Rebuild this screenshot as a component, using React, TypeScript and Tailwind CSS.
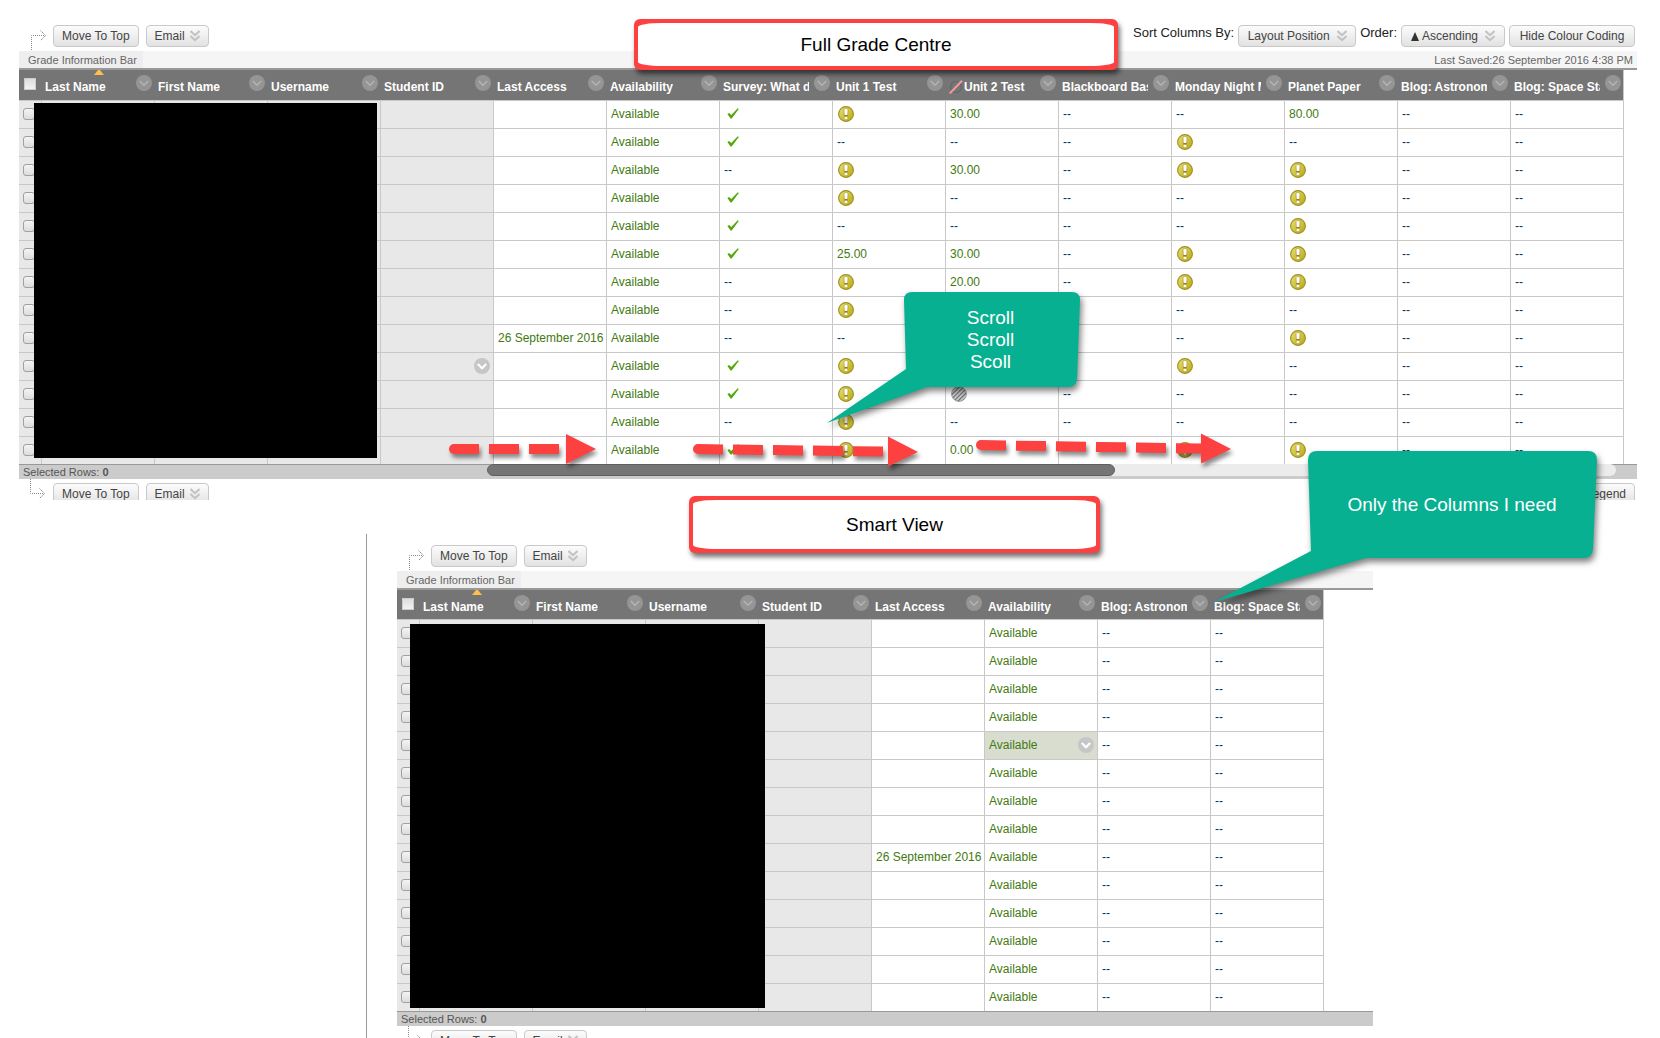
import React from "react";

type Cell = "ok" | "!" | "hatch" | string;

const IDENTITY = ["Last Name", "First Name", "Username", "Student ID"];

const FULL_COLUMNS = [
  "Survey: What d",
  "Unit 1 Test",
  "Unit 2 Test",
  "Blackboard Bas",
  "Monday Night M",
  "Planet Paper",
  "Blog: Astronom",
  "Blog: Space Sta",
];

const SMART_COLUMNS = ["Blog: Astronom", "Blog: Space Sta"];

const FULL_ROWS: Cell[][] = [
  ["ok", "!", "30.00", "--", "--", "80.00", "--", "--"],
  ["ok", "--", "--", "--", "!", "--", "--", "--"],
  ["--", "!", "30.00", "--", "!", "!", "--", "--"],
  ["ok", "!", "--", "--", "--", "!", "--", "--"],
  ["ok", "--", "--", "--", "--", "!", "--", "--"],
  ["ok", "25.00", "30.00", "--", "!", "!", "--", "--"],
  ["--", "!", "20.00", "--", "!", "!", "--", "--"],
  ["--", "!", "--", "--", "--", "--", "--", "--"],
  ["--", "--", "--", "--", "--", "!", "--", "--"],
  ["ok", "!", "--", "--", "!", "--", "--", "--"],
  ["ok", "!", "hatch", "--", "--", "--", "--", "--"],
  ["--", "!", "--", "--", "--", "--", "--", "--"],
  ["ok", "!", "0.00", "--", "!", "!", "--", "--"],
];

const SMART_ROWS: Cell[][] = Array.from({ length: 14 }, () => ["--", "--"]);

function DoubleChevron() {
  return (
    <svg width="10" height="12" viewBox="0 0 10 12" fill="none" stroke="#c2c2c2" strokeWidth="2" aria-hidden="true">
      <path d="M0.5 1 L5 5.2 L9.5 1 M0.5 6 L5 10.2 L9.5 6" />
    </svg>
  );
}

function CircleChevron({ light = false }: { light?: boolean }) {
  return (
    <svg width="16" height="16" viewBox="0 0 16 16" fill="none" aria-hidden="true">
      <circle cx="8" cy="8" r="8" fill={light ? "#c6c6c8" : "#959595"} />
      <path d="M3.8 6 L8 10.2 L12.2 6" stroke={light ? "#ffffff" : "#b4b4b4"} strokeWidth={light ? 2.2 : 1.5} />
    </svg>
  );
}

function NeedsGrading() {
  return (
    <svg width="16" height="16" viewBox="0 0 16 16" role="img" aria-label="Needs grading" className="ml-px block">
      <defs>
        <linearGradient id="gold" x1="0" y1="0" x2="1" y2="1">
          <stop offset="0" stopColor="#e6e27c" />
          <stop offset="1" stopColor="#b5a80c" />
        </linearGradient>
      </defs>
      <circle cx="8" cy="8" r="7.4" fill="url(#gold)" stroke="#a08f1c" strokeWidth="1.1" />
      <path d="M6 3 Q8 2 10 3 L9.6 9.4 H6.4 Z" fill="#fff" stroke="#a5871e" strokeWidth="0.5" />
      <path d="M6.4 9.8 H9.6" stroke="#8e4b1c" strokeWidth="0.9" />
      <ellipse cx="8" cy="12" rx="1.9" ry="1.5" fill="#fff" stroke="#a5871e" strokeWidth="0.4" />
    </svg>
  );
}

function Completed() {
  return (
    <svg width="12" height="11" viewBox="0 0 12 11" role="img" aria-label="Completed" className="ml-[3px] block">
      <path d="M0.4 6 L2.2 5 L4.2 7 L10.8 0.3 L11.8 1 L4.7 10.4 L3.5 10.4 Z" fill="#55a80c" />
    </svg>
  );
}

function Exempt() {
  return (
    <svg width="16" height="16" viewBox="0 0 16 16" role="img" aria-label="Exempt" className="ml-px block">
      <defs>
        <pattern id="hatch" width="3" height="3" patternUnits="userSpaceOnUse" patternTransform="rotate(45)">
          <rect width="3" height="3" fill="#d6d6d6" />
          <rect width="1.3" height="3" fill="#6b6b6b" />
        </pattern>
      </defs>
      <circle cx="8" cy="8" r="7.4" fill="url(#hatch)" stroke="#8a8a8a" strokeWidth="0.8" />
    </svg>
  );
}

function HiddenFromStudents() {
  return (
    <svg width="15" height="14" viewBox="0 0 15 14" fill="none" role="img" aria-label="Hidden" className="mt-px shrink-0">
      <circle cx="7" cy="7" r="5.5" stroke="#656565" strokeWidth="1.2" />
      <path d="M0.8 13.4 L13 0.8" stroke="#f79a9a" strokeWidth="2" />
    </svg>
  );
}

function FlowArrow({ up = true }: { up?: boolean }) {
  return (
    <svg width="16" height="20" viewBox="0 0 16 20" fill="none" stroke="#8a8a8a" aria-hidden="true" className={up ? "mt-[5px]" : ""}>
      <path d={up ? "M0.5 20 V5.5 H14" : "M0.5 0 V14.5 H14"} strokeDasharray="1 1" />
      <path d={up ? "M9.5 0.5 L14.5 5.5 L9.5 10.5" : "M9.5 9.5 L14.5 14.5 L9.5 19.5"} strokeDasharray="1.4 0.6" />
    </svg>
  );
}

function ToolButton({ children, menu = false, size = "gap-[7px]" }: { children: React.ReactNode; menu?: boolean; size?: string }) {
  return (
    <button
      type="button"
      aria-haspopup={menu ? "menu" : undefined}
      className={`flex h-[22px] shrink-0 items-center justify-center rounded-sm border border-[#c9c9c9] bg-linear-to-b from-[#fcfcfc] to-[#e2e2e2] px-2 text-xs whitespace-nowrap text-[#444] ${size}`}
    >
      {children}
      {menu && <DoubleChevron />}
    </button>
  );
}

function ActionButtons({ up = true }: { up?: boolean }) {
  return (
    <div className="flex items-start">
      <FlowArrow up={up} />
      <div className={up ? "ml-1.5 flex gap-[7px]" : "mt-1 ml-[7px] flex gap-[7px]"}>
        <ToolButton>Move To Top</ToolButton>
        <ToolButton menu size="gap-[5px]">
          Email
        </ToolButton>
      </div>
    </div>
  );
}

function InformationBar({ saved }: { saved?: string }) {
  return (
    <div className="flex h-[19px] items-stretch justify-between border-b-2 border-[#999] bg-[#f5f5f5] text-[11px] leading-[17px] text-[#666]">
      <span className="w-[124px] bg-[#eee] pt-px pl-[9px]">Grade Information Bar</span>
      {saved && <span className="pt-px pr-1">{saved}</span>}
    </div>
  );
}

function Tick({ label, head = false }: { label: string; head?: boolean }) {
  return (
    <input
      type="checkbox"
      aria-label={label}
      className={
        head
          ? "mt-2 ml-[5px] block size-3 appearance-none border border-[#ccc] bg-linear-to-b from-[#ddd] to-[#f2f2f2]"
          : "ml-1 block size-3 appearance-none rounded-[3px] border border-[#a0a0a0] bg-linear-to-b from-[#f4f4f4] to-[#ddd]"
      }
    />
  );
}

function CellContent({ value }: { value: Cell }) {
  if (value === "ok") return <Completed />;
  if (value === "!") return <NeedsGrading />;
  if (value === "hatch") return <Exempt />;
  return <span className={value === "--" ? "text-[#003366]" : "text-[#427a10]"}>{value}</span>;
}

interface GridProps {
  columns: string[];
  rows: Cell[][];
  headHeight: string;
  accessRow: number;
  idMenuRow?: number;
  activeRow?: number;
}

function GradeGrid({ columns, rows, headHeight, accessRow, idMenuRow, activeRow }: GridProps) {
  const heads = [...IDENTITY, "Last Access", "Availability", ...columns];
  const line = "border-t border-l border-[#c8c8c8]";
  return (
    <table className="w-full table-fixed border-separate border-spacing-0 border-r border-[#c8c8c8] text-xs leading-4">
      <thead>
        <tr className={`bg-[#757575] text-white ${headHeight}`}>
          <th scope="col" className="w-[22px] p-0 align-top">
            <Tick head label="Select all rows" />
          </th>
          {heads.map((name, i) => (
            <th key={name} scope="col" className="relative p-0 text-left align-top font-bold">
              {i === 0 && (
                <svg width="10" height="5" viewBox="0 0 10 5" className="absolute top-0 left-[53px]" role="img" aria-label="Sorted ascending">
                  <path d="M0 5 L4 0 H6 L10 5 Z" fill="#ffbf4d" />
                </svg>
              )}
              <div className="flex items-start gap-[5px] pr-0.5 pl-1">
                <span className="mt-[9px] flex min-w-0 flex-1 overflow-hidden whitespace-nowrap">
                  {name === "Unit 2 Test" && <HiddenFromStudents />}
                  {name}
                </span>
                <button type="button" aria-label={`${name} options`} className="mt-[5px] shrink-0">
                  <CircleChevron />
                </button>
              </div>
            </th>
          ))}
        </tr>
      </thead>
      <tbody>
        {rows.map((row, r) => (
          <tr key={r} className="h-7">
            <td className="border-t border-[#c8c8c8] bg-[#e8e8e8] p-0 pb-0.5">
              <Tick label={`Select row ${r + 1}`} />
            </td>
            {IDENTITY.map((name) => (
              <td key={name} className={`bg-[#e8e8e8] p-0 pb-0.5 ${line}`}>
                {name === "Student ID" && r === idMenuRow && (
                  <button type="button" aria-label="Cell options" className="ml-auto mr-[3px] block">
                    <CircleChevron light />
                  </button>
                )}
              </td>
            ))}
            <td className={`overflow-hidden p-0 pb-0.5 pl-1 whitespace-nowrap text-[#427a10] ${line}`}>
              {r === accessRow && "26 September 2016"}
            </td>
            <td className={`p-0 pb-0.5 pl-1 text-[#427a10] ${line} ${r === activeRow ? "bg-[#d9ddd0]" : ""}`}>
              <div className="flex items-center justify-between pr-[3px]">
                Available
                {r === activeRow && (
                  <button type="button" aria-label="Cell options">
                    <CircleChevron light />
                  </button>
                )}
              </div>
            </td>
            {row.map((value, c) => (
              <td key={c} className={`p-0 pb-0.5 pl-1 ${line}`}>
                <CellContent value={value} />
              </td>
            ))}
          </tr>
        ))}
      </tbody>
    </table>
  );
}

function SelectedRows({ scroll = false }: { scroll?: boolean }) {
  return (
    <div className="relative h-[15px] border-t border-[#999] bg-[#cbcbcb] pl-1 text-[11px] leading-[14px] text-[#555]">
      Selected Rows: <b>0</b>
      {scroll && (
        <div className="absolute -top-px right-[21px] left-[468px] h-3 rounded-full bg-[#ececec]">
          <div className="h-3 w-[628px] rounded-full border border-[#606060] bg-[#757575]" />
        </div>
      )}
    </div>
  );
}

function Caption({ children, place }: { children: React.ReactNode; place: string }) {
  return (
    <div className={`absolute rounded-md bg-[#fd4141] p-1 shadow-[2px_4px_5px_rgba(0,0,0,0.55)] ${place}`}>
      <div className="flex h-full items-center justify-center rounded-[24px/4px] bg-white pt-0.5 text-[19px] text-black">{children}</div>
    </div>
  );
}

function Callout({ place, path, text, children }: { place: string; path: string; text: string; children: React.ReactNode }) {
  return (
    <div className={`absolute ${place}`}>
      <svg className="absolute inset-0 size-full overflow-visible drop-shadow-[2px_4px_3px_rgba(0,0,0,0.5)]" aria-hidden="true">
        <path d={path} fill="#08b092" />
      </svg>
      <div className={`relative flex flex-col items-center justify-center text-[19px] leading-[22px] text-white ${text}`}>{children}</div>
    </div>
  );
}

interface ArrowProps {
  place: string;
  dashes: [number, number][];
  head: number;
  drop: number;
}

function DashedArrow({ place, dashes, head, drop }: ArrowProps) {
  const total = head + 30;
  const y = (x: number) => 15 + (drop * x) / total;
  return (
    <svg
      width={total}
      height="34"
      className={`absolute overflow-visible drop-shadow-[2px_4px_2px_rgba(0,0,0,0.45)] ${place}`}
      fill="#fd4141"
      aria-hidden="true"
    >
      {dashes.map(([a, b], i) => (
        <path
          key={a}
          d={
            i === 0
              ? `M5 ${y(0) - 5} L${b} ${y(b) - 5} V${y(b) + 5} L5 ${y(0) + 5} A5 5 0 0 1 5 ${y(0) - 5} Z`
              : `M${a} ${y(a) - 5} L${b} ${y(b) - 5} V${y(b) + 5} L${a} ${y(a) + 5} Z`
          }
        />
      ))}
      <path d={`M${head} ${y(head) - 15} L${total} ${y(total)} L${head} ${y(head) + 15} Z`} />
    </svg>
  );
}

export default function App() {
  return (
    <main className="relative min-h-screen overflow-hidden bg-white font-['Liberation_Sans',Arial,sans-serif]">
      <section aria-label="Full Grade Centre" className="relative mr-[23px] ml-[19px] pt-[25px]">
        <div className="flex h-[26px] items-start justify-between pr-0.5 pl-3">
          <ActionButtons />
          <div className="flex items-start gap-1 text-[13px] leading-[15px] text-[#222]">
            <span>Sort Columns By:</span>
            <ToolButton menu size="min-w-[118px] gap-[7px]">
              Layout Position
            </ToolButton>
            <span>Order:</span>
            <ToolButton menu size="min-w-[104px] gap-[7px]">
              <span className="flex items-center gap-[3px]">
                <svg width="8" height="9" viewBox="0 0 8 9" fill="#333" aria-hidden="true">
                  <path d="M4 0 L8 9 H0 Z" />
                </svg>
                Ascending
              </span>
            </ToolButton>
            <ToolButton size="min-w-[126px]">Hide Colour Coding</ToolButton>
          </div>
        </div>
        <InformationBar saved="Last Saved:26 September 2016 4:38 PM" />
        <div className="relative pr-[13px]">
          <GradeGrid columns={FULL_COLUMNS} rows={FULL_ROWS} headHeight="h-[30px]" accessRow={8} idMenuRow={9} />
          <div className="absolute top-[33px] bottom-[6px] left-[15px] w-[343px] bg-black" />
        </div>
        <SelectedRows scroll />
        <div className="flex h-[21px] items-start justify-between overflow-hidden pr-0.5 pl-[11px]">
          <ActionButtons up={false} />
          <div className="mt-1">
            <ToolButton>Icon Legend</ToolButton>
          </div>
        </div>
      </section>

      <div className="mt-[34px] ml-[366px] border-l border-[#999] pt-[11px]">
        <section aria-label="Smart View" className="mr-[287px] ml-[30px]">
          <div className="flex h-[26px] items-start pl-3">
            <ActionButtons />
          </div>
          <InformationBar />
          <div className="relative pr-[49px]">
            <GradeGrid columns={SMART_COLUMNS} rows={SMART_ROWS} headHeight="h-[29px]" accessRow={8} activeRow={4} />
            <div className="absolute top-[34px] bottom-[3px] left-[13px] w-[355px] bg-black" />
          </div>
          <SelectedRows />
          <div className="flex h-3 items-start overflow-hidden pl-[11px]">
            <ActionButtons up={false} />
          </div>
        </section>
      </div>

      <Caption place="top-[19px] left-[634px] h-[51px] w-[484px]">Full Grade Centre</Caption>
      <Caption place="top-[496px] left-[689px] h-[57px] w-[411px]">Smart View</Caption>

      <DashedArrow place="top-[434px] left-[449px]" dashes={[[0, 30], [40, 70], [80, 110]]} head={117} drop={0} />
      <DashedArrow place="top-[434px] left-[693px]" dashes={[[0, 30], [40, 70], [80, 110], [120, 150], [160, 190]]} head={195} drop={3} />
      <DashedArrow
        place="top-[430px] left-[976px]"
        dashes={[[0, 30], [40, 70], [80, 110], [120, 150], [160, 190], [200, 226]]}
        head={225}
        drop={4}
      />

      <Callout
        place="top-[292px] left-[903px]"
        path="M9 0 H169 Q177 0 177 8 L174 87 Q173 95 165 95 H24 L-76 131 L3 77 L1 8 Q1 0 9 0 Z"
        text="h-[95px] w-[175px]"
      >
        <span>Scroll</span>
        <span>Scroll</span>
        <span>Scoll</span>
      </Callout>
      <Callout
        place="top-[451px] left-[1308px]"
        path="M9 0 H280 Q289 0 289 9 L285 98 Q284 107 276 107 H58 L-94 151 L3 100 L0 9 Q0 0 9 0 Z"
        text="h-[107px] w-[288px]"
      >
        <span>Only the Columns I need</span>
      </Callout>
    </main>
  );
}
